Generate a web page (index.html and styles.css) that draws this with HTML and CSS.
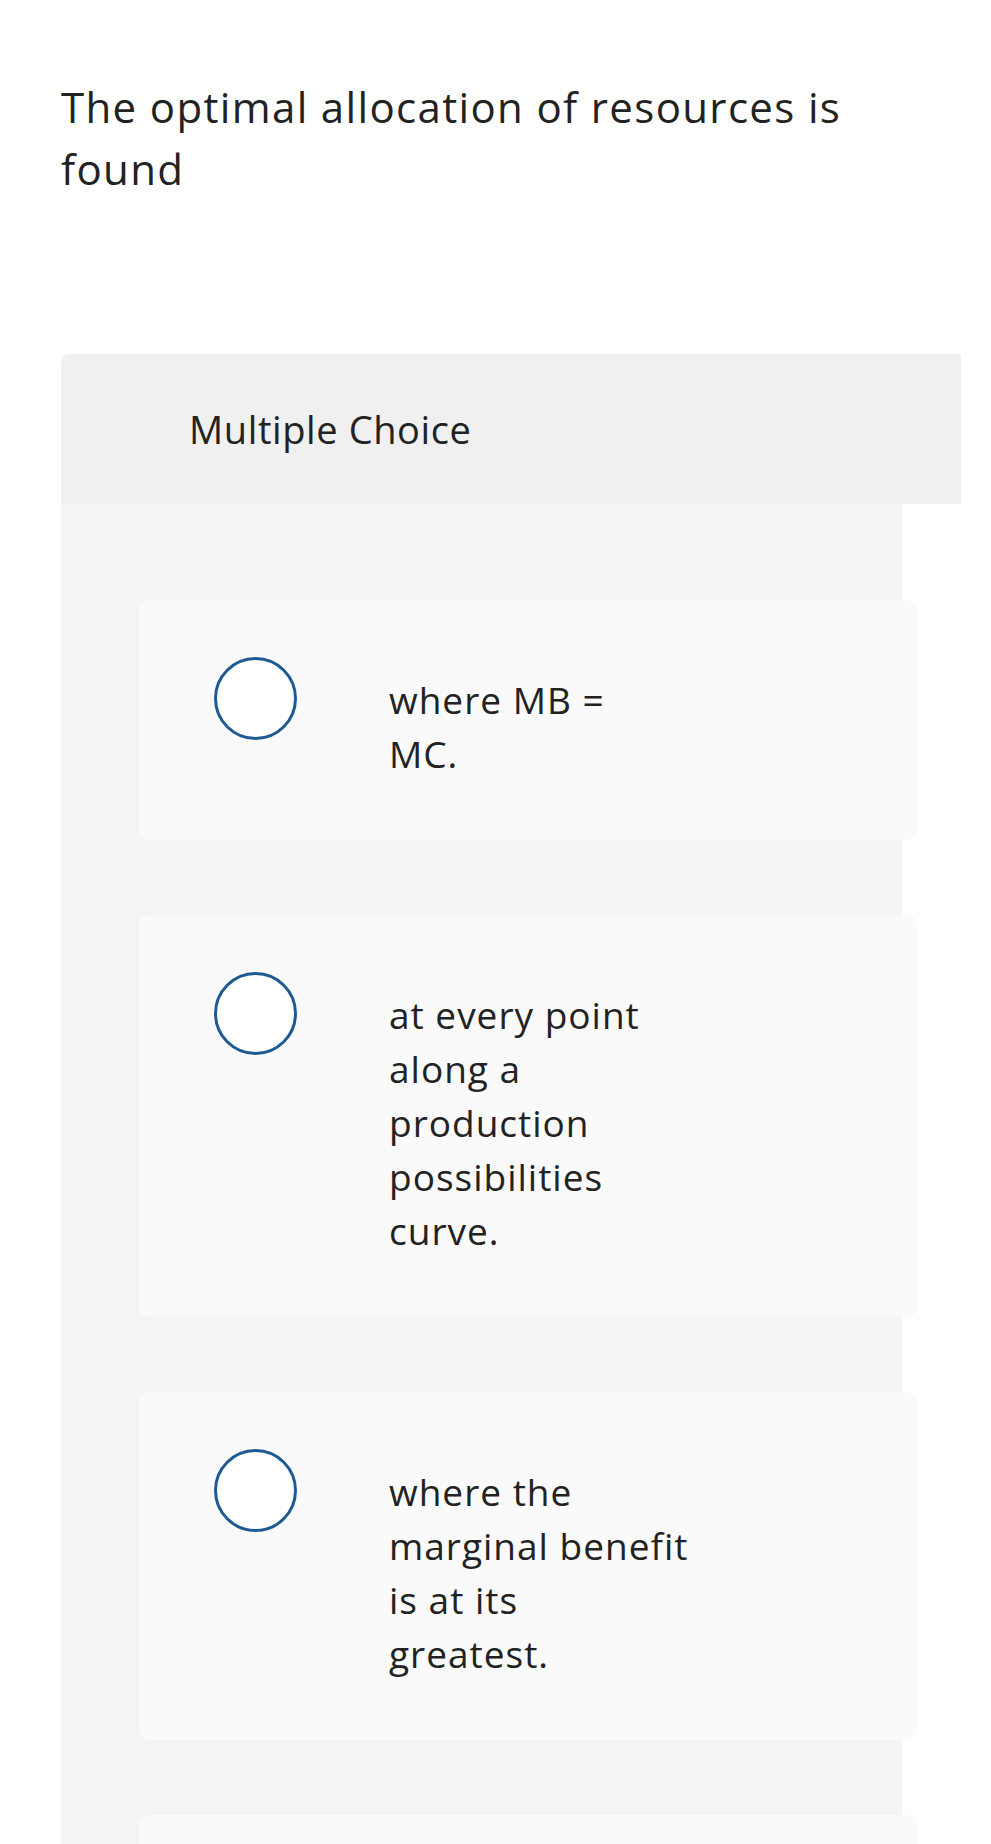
FILE: index.html
```html
<!DOCTYPE html>
<html lang="en">
<head>
<meta charset="utf-8">
<title>Multiple Choice</title>
<link rel="stylesheet" href="styles.css">
</head>
<body>
<main class="question">
  <p class="prompt">The optimal allocation of resources is found</p>
  <section class="choice-block">
    <header class="choice-header">Multiple Choice</header>
    <div class="choice-panel">
      <label class="option">
        <span class="radio"></span>
        <span class="option-text">where MB = MC.</span>
      </label>
      <label class="option">
        <span class="radio"></span>
        <span class="option-text">at every point along a production possibilities curve.</span>
      </label>
      <label class="option">
        <span class="radio"></span>
        <span class="option-text">where the marginal&nbsp;benefit is at its greatest.</span>
      </label>
      <label class="option">
        <span class="radio"></span>
        <span class="option-text">where the marginal cost is at its lowest.</span>
      </label>
    </div>
  </section>
</main>
</body>
</html>
```

FILE: styles.css
```css
html, body {
  margin: 0;
  padding: 0;
  background: #ffffff;
}

body {
  font-family: "Open Sans", "Liberation Sans", sans-serif;
  color: #222222;
  height: 1844px;
  overflow: hidden;
}

.question {
  padding: 76px 30px 0 61px;
}

.prompt {
  margin: 0;
  font-size: 42px;
  letter-spacing: 1.35px;
  line-height: 62px;
  max-width: 841px;
}

.choice-block {
  margin-top: 154px;
}

.choice-header {
  background: #f0f0f0;
  border-radius: 8px 0 0 0;
  padding: 48px 0 48px 128px;
  font-size: 38px;
  letter-spacing: 0.6px;
  line-height: 54px;
}

.choice-panel {
  width: 841px;
  box-sizing: border-box;
  background: #f4f4f4;
  padding: 96px 0 0 78px;
  display: flex;
  flex-direction: column;
  gap: 75px;
  min-height: 1400px;
}

.option {
  display: flex;
  align-items: flex-start;
  background: #fafafa;
  border-radius: 10px;
  margin-right: -15px;
  padding: 57px 0 59px 75px;
}

.radio {
  flex: none;
  width: 83px;
  height: 83px;
  box-sizing: border-box;
  border: 3px solid #1d5a93;
  border-radius: 50%;
  background: #ffffff;
}

.option-text {
  margin-left: 92px;
  padding-top: 16px;
  width: 280px;
  font-size: 37px;
  letter-spacing: 1px;
  line-height: 54px;
}
```
